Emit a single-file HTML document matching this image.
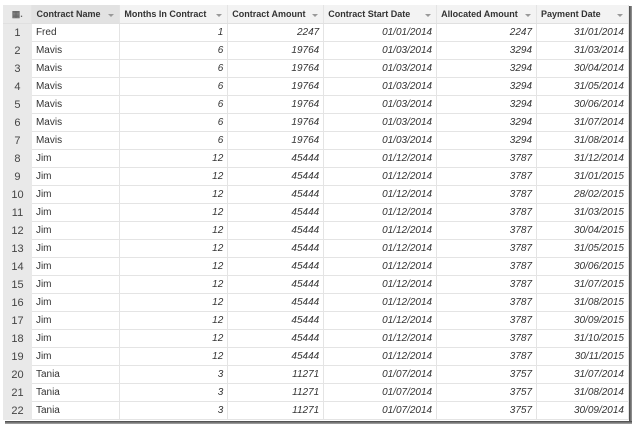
<!DOCTYPE html>
<html><head><meta charset="utf-8"><style>
body{margin:0;width:634px;height:427px;background:#fff;position:relative;overflow:hidden;font-family:"Liberation Sans",sans-serif;font-size:10px;color:#333}
.frame{position:absolute;left:3px;top:5px;width:626px;height:416px;background:#fff;overflow:hidden}
.shadowR{position:absolute;left:629px;top:6px;width:3px;height:417px;background:linear-gradient(90deg,#444,#999)}
.shadowB{position:absolute;left:5px;top:421px;width:627px;height:3px;background:linear-gradient(180deg,#444,#aaa)}
table{border-collapse:collapse;table-layout:fixed;position:absolute;left:0;top:0}
td,th{height:17px;padding:0 4px;border-right:1px solid #e4e4e4;border-bottom:1px solid #e4e4e4;white-space:nowrap;overflow:hidden}
th{height:18px;background:#f3f3f3;font-weight:bold;font-size:9px;text-align:left;color:#333;border-bottom:1px solid #e0e0e0;position:relative}
th.sel{background:#e2e2e2}
th .dd{position:absolute;right:5px;top:9px;width:0;height:0;border-left:3px solid transparent;border-right:3px solid transparent;border-top:3px solid #999}
td.n{background:#e9e9e9;text-align:center;font-size:11px;color:#444;border-right:none;border-bottom:1px solid #e9e9e9}
td.r{text-align:right;font-style:italic}
</style></head><body>
<div class="frame">
<table>
<colgroup><col style="width:29px"><col style="width:88px"><col style="width:108px"><col style="width:96px"><col style="width:113px"><col style="width:100px"><col style="width:92px"></colgroup>
<tr><th style="background:#e9e9e9;text-align:center;color:#666">▦.</th><th class="sel">Contract Name<span class="dd"></span></th><th>Months In Contract<span class="dd"></span></th><th>Contract Amount<span class="dd"></span></th><th>Contract Start Date<span class="dd"></span></th><th>Allocated Amount<span class="dd"></span></th><th>Payment Date<span class="dd"></span></th></tr>
<tr><td class="n">1</td><td>Fred</td><td class="r">1</td><td class="r">2247</td><td class="r">01/01/2014</td><td class="r">2247</td><td class="r">31/01/2014</td></tr>
<tr><td class="n">2</td><td>Mavis</td><td class="r">6</td><td class="r">19764</td><td class="r">01/03/2014</td><td class="r">3294</td><td class="r">31/03/2014</td></tr>
<tr><td class="n">3</td><td>Mavis</td><td class="r">6</td><td class="r">19764</td><td class="r">01/03/2014</td><td class="r">3294</td><td class="r">30/04/2014</td></tr>
<tr><td class="n">4</td><td>Mavis</td><td class="r">6</td><td class="r">19764</td><td class="r">01/03/2014</td><td class="r">3294</td><td class="r">31/05/2014</td></tr>
<tr><td class="n">5</td><td>Mavis</td><td class="r">6</td><td class="r">19764</td><td class="r">01/03/2014</td><td class="r">3294</td><td class="r">30/06/2014</td></tr>
<tr><td class="n">6</td><td>Mavis</td><td class="r">6</td><td class="r">19764</td><td class="r">01/03/2014</td><td class="r">3294</td><td class="r">31/07/2014</td></tr>
<tr><td class="n">7</td><td>Mavis</td><td class="r">6</td><td class="r">19764</td><td class="r">01/03/2014</td><td class="r">3294</td><td class="r">31/08/2014</td></tr>
<tr><td class="n">8</td><td>Jim</td><td class="r">12</td><td class="r">45444</td><td class="r">01/12/2014</td><td class="r">3787</td><td class="r">31/12/2014</td></tr>
<tr><td class="n">9</td><td>Jim</td><td class="r">12</td><td class="r">45444</td><td class="r">01/12/2014</td><td class="r">3787</td><td class="r">31/01/2015</td></tr>
<tr><td class="n">10</td><td>Jim</td><td class="r">12</td><td class="r">45444</td><td class="r">01/12/2014</td><td class="r">3787</td><td class="r">28/02/2015</td></tr>
<tr><td class="n">11</td><td>Jim</td><td class="r">12</td><td class="r">45444</td><td class="r">01/12/2014</td><td class="r">3787</td><td class="r">31/03/2015</td></tr>
<tr><td class="n">12</td><td>Jim</td><td class="r">12</td><td class="r">45444</td><td class="r">01/12/2014</td><td class="r">3787</td><td class="r">30/04/2015</td></tr>
<tr><td class="n">13</td><td>Jim</td><td class="r">12</td><td class="r">45444</td><td class="r">01/12/2014</td><td class="r">3787</td><td class="r">31/05/2015</td></tr>
<tr><td class="n">14</td><td>Jim</td><td class="r">12</td><td class="r">45444</td><td class="r">01/12/2014</td><td class="r">3787</td><td class="r">30/06/2015</td></tr>
<tr><td class="n">15</td><td>Jim</td><td class="r">12</td><td class="r">45444</td><td class="r">01/12/2014</td><td class="r">3787</td><td class="r">31/07/2015</td></tr>
<tr><td class="n">16</td><td>Jim</td><td class="r">12</td><td class="r">45444</td><td class="r">01/12/2014</td><td class="r">3787</td><td class="r">31/08/2015</td></tr>
<tr><td class="n">17</td><td>Jim</td><td class="r">12</td><td class="r">45444</td><td class="r">01/12/2014</td><td class="r">3787</td><td class="r">30/09/2015</td></tr>
<tr><td class="n">18</td><td>Jim</td><td class="r">12</td><td class="r">45444</td><td class="r">01/12/2014</td><td class="r">3787</td><td class="r">31/10/2015</td></tr>
<tr><td class="n">19</td><td>Jim</td><td class="r">12</td><td class="r">45444</td><td class="r">01/12/2014</td><td class="r">3787</td><td class="r">30/11/2015</td></tr>
<tr><td class="n">20</td><td>Tania</td><td class="r">3</td><td class="r">11271</td><td class="r">01/07/2014</td><td class="r">3757</td><td class="r">31/07/2014</td></tr>
<tr><td class="n">21</td><td>Tania</td><td class="r">3</td><td class="r">11271</td><td class="r">01/07/2014</td><td class="r">3757</td><td class="r">31/08/2014</td></tr>
<tr><td class="n">22</td><td>Tania</td><td class="r">3</td><td class="r">11271</td><td class="r">01/07/2014</td><td class="r">3757</td><td class="r">30/09/2014</td></tr>
</table>
</div>
<div class="shadowR"></div><div class="shadowB"></div>
</body></html>
